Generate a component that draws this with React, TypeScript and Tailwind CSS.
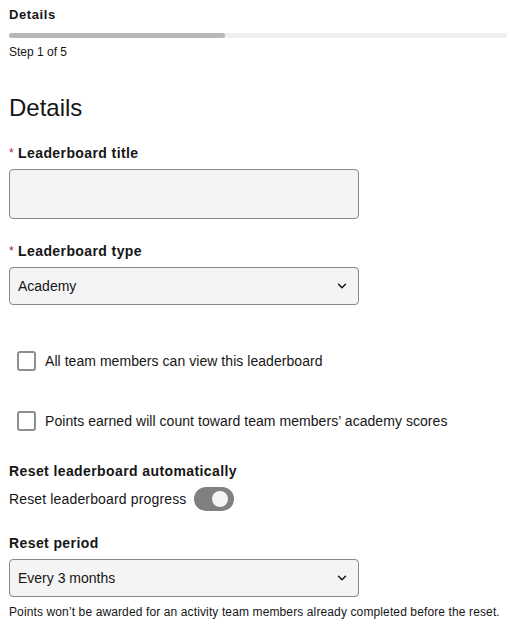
import { ChevronDown } from "lucide-react";

const font = { fontFamily: '"Liberation Sans", Arial, sans-serif' };

function Label({ text, required }: { text: string; required?: boolean }) {
  return (
    <div className="h-5 text-[14px] leading-5 font-bold tracking-[0.4px] text-[#161616] flex items-center">
      {required && <span className="text-[#a4262c] font-normal text-[12px] mr-[4px]">*</span>}
      {text}
    </div>
  );
}

function Select({ value }: { value: string }) {
  return (
    <div className="mt-[6px] w-[350px] h-[38px] rounded-[4px] border border-[#8a8a8a] bg-[#f4f4f4] flex items-center justify-between pl-[8px] pr-[9px]">
      <span className="text-[14px] text-[#161616]">{value}</span>
      <ChevronDown size={14} strokeWidth={2.5} className="text-[#161616]" />
    </div>
  );
}

function Checkbox({ text, className }: { text: string; className: string }) {
  return (
    <label className={`flex items-center h-5 ml-[8px] gap-[9px] ${className}`}>
      <span className="w-[19px] h-[20px] rounded-[3px] border-2 border-[#8e8e8e] bg-white" />
      <span className="text-[14px] tracking-[0.05px] text-[#161616]">{text}</span>
    </label>
  );
}

export default function App() {
  return (
    <div className="bg-white min-h-screen pl-[9px] pt-[7px] overflow-hidden" style={font}>
      <div className="text-[13px] leading-4 font-bold tracking-[0.6px] text-[#161616]">Details</div>
      <div className="mt-[10px] h-[5px] bg-[#efefef] rounded-l-full">
        <div className="h-full w-[216px] bg-[#b8b8b8] rounded-full" />
      </div>
      <div className="mt-[6px] text-[12px] leading-4 text-[#161616]">Step 1 of 5</div>

      <h1 className="mt-[34px] text-[24px] leading-7 text-[#161616]">Details</h1>

      <div className="mt-[21px]">
        <Label text="Leaderboard title" required />
      </div>
      <input className="mt-[6px] block w-[350px] h-[50px] rounded-[4px] border border-[#8a8a8a] bg-[#f4f4f4] px-2 text-[14px]" />

      <div className="mt-[22px]">
        <Label text="Leaderboard type" required />
      </div>
      <Select value="Academy" />

      <Checkbox text="All team members can view this leaderboard" className="mt-[46px]" />
      <Checkbox text="Points earned will count toward team members’ academy scores" className="mt-[40px]" />

      <div className="mt-[30px]">
        <Label text="Reset leaderboard automatically" />
      </div>
      <div className="mt-[6px] h-6 flex items-center gap-[8px]">
        <span className="text-[14px] tracking-[0.15px] text-[#161616]">Reset leaderboard progress</span>
        <span className="w-[40px] h-[24px] rounded-full bg-[#808080] flex items-center justify-end pr-[6px]">
          <span className="w-[16px] h-[16px] rounded-full bg-[#f4f4f4]" />
        </span>
      </div>

      <div className="mt-[22px]">
        <Label text="Reset period" />
      </div>
      <Select value="Every 3 months" />
      <div className="mt-[7px] text-[12px] leading-4 tracking-[0.12px] text-[#161616]">
        Points won’t be awarded for an activity team members already completed before the reset.
      </div>
    </div>
  );
}
